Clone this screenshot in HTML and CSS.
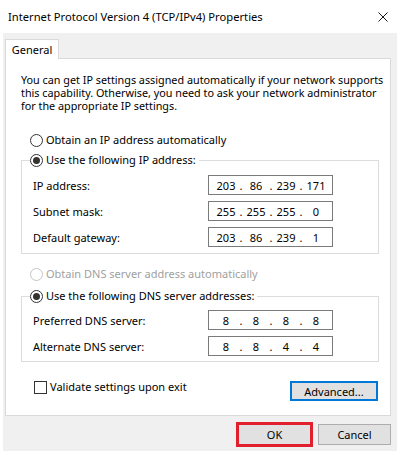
FILE: index.html
```html
<!DOCTYPE html>
<html lang="en">
<head>
    <meta charset="UTF-8">
    <title>Internet Protocol Version 4 (TCP/IPv4) Properties</title>
    <link rel="stylesheet" href="styles.css">
</head>
<body>
    <!-- Window title bar -->
    <div class="titlebar">
        <span class="title">Internet Protocol Version 4 (TCP/IPv4) Properties</span>
        <svg class="close" width="10" height="10" viewBox="0 0 10 10">
            <path d="M0.5 0.5 L9.5 9.5 M9.5 0.5 L0.5 9.5" stroke="#1a1a1a" stroke-width="1" fill="none"/>
        </svg>
    </div>

    <div class="dialog">
        <div class="tabs">
            <div class="tab">General</div>
        </div>

        <div class="panel">
            <p class="intro">You can get IP settings assigned automatically if your network supports<br>this capability. Otherwise, you need to ask your network administrator<br>for the appropriate IP settings.</p>

            <div class="option option-ip"><span class="radio"></span>Obtain an IP address automatically</div>

            <fieldset class="group group-ip">
                <legend><span class="radio checked"></span>Use the following IP address:</legend>
                <div class="field-row">
                    <span class="field-label">IP address:</span>
                    <div class="ipbox"><span>203</span><i>.</i><span>86</span><i>.</i><span>239</span><i>.</i><span>171</span></div>
                </div>
                <div class="field-row">
                    <span class="field-label">Subnet mask:</span>
                    <div class="ipbox"><span>255</span><i>.</i><span>255</span><i>.</i><span>255</span><i>.</i><span>0</span></div>
                </div>
                <div class="field-row">
                    <span class="field-label">Default gateway:</span>
                    <div class="ipbox"><span>203</span><i>.</i><span>86</span><i>.</i><span>239</span><i>.</i><span>1</span></div>
                </div>
            </fieldset>

            <div class="option option-dns disabled"><span class="radio"></span>Obtain DNS server address automatically</div>

            <fieldset class="group group-dns">
                <legend><span class="radio checked"></span>Use the following DNS server addresses:</legend>
                <div class="field-row">
                    <span class="field-label">Preferred DNS server:</span>
                    <div class="ipbox"><span>8</span><i>.</i><span>8</span><i>.</i><span>8</span><i>.</i><span>8</span></div>
                </div>
                <div class="field-row">
                    <span class="field-label">Alternate DNS server:</span>
                    <div class="ipbox"><span>8</span><i>.</i><span>8</span><i>.</i><span>4</span><i>.</i><span>4</span></div>
                </div>
            </fieldset>

            <div class="bottom-row">
                <div class="check-row"><span class="checkbox"></span>Validate settings upon exit</div>
                <button class="btn btn-advanced">Advanced...</button>
            </div>
        </div>

        <div class="buttons">
            <button class="btn btn-ok">OK</button>
            <button class="btn">Cancel</button>
        </div>
    </div>
</body>
</html>
```

FILE: styles.css
```css
/* Page base */
html, body {
    margin: 0;
    padding: 0;
    background: #fff;
    color: #000;
    font-family: 'Noto Sans', 'Liberation Sans', sans-serif;
    font-size: 11px;
}

/* Title bar */
.titlebar {
    height: 33px;
    display: flex;
    align-items: center;
    justify-content: space-between;
    padding: 0 11px 0 8px;
}

.title {
    line-height: 16px;
    font-size: 11.2px;
}

/* Gray dialog body */
.dialog {
    background: #f0f0f0;
    margin: 0 2px 0 3px;
    padding: 6px 6px 6px 2px;
}

.tabs {
    display: flex;
}

.tab {
    position: relative; /* sit over the panel border */
    width: 52px;
    height: 19px;
    line-height: 19px;
    text-align: center;
    background: #fff;
    border: 1px solid #d9d9d9;
    border-bottom: none;
    margin-bottom: -1px;
}

/* White tab page */
.panel {
    background: #fff;
    border: 1px solid #d9d9d9;
    padding: 14px 11px 14px 15px;
}

.intro {
    margin: 0;
    font-size: 10.8px;
    line-height: 13px;
    white-space: nowrap;
}

/* Radio options */
.option {
    display: flex;
    align-items: center;
    line-height: 16px;
    margin-left: 9px;
}

.option-ip {
    margin-top: 20px;
}

.option-dns {
    margin-top: 12px;
}

.disabled {
    color: #a0a0a0;
}

.radio {
    width: 11px;
    height: 11px;
    border: 1px solid #333;
    border-radius: 50%;
    margin-right: 3px;
    background: #fff;
    display: inline-flex;
    align-items: center;
    justify-content: center;
    flex-shrink: 0;
}

.disabled .radio {
    border-color: #c4c4c4;
}

.radio.checked::after {
    content: "";
    width: 7px;
    height: 7px;
    border-radius: 50%;
    background: #333;
}

/* Group boxes */
.group {
    margin: 4px 0 0 0;
    padding: 0 0 6px 11px;
    border: 1px solid #dcdcdc;
    min-width: 0;
}

.group-dns {
    margin-top: 6px;
    padding-bottom: 5px;
}

.group legend {
    display: flex;
    align-items: center;
    line-height: 16px;
    padding: 0 3px 0 0;
    margin-left: -3px;
}

.field-row {
    display: flex;
    align-items: center;
    margin-top: 6px;
}

.group-ip .field-row:first-of-type {
    margin-top: 7px;
}

.field-label {
    width: 175px;
}

/* IP address control */
.ipbox {
    width: 117px;
    height: 18px;
    border: 1px solid #7a7a7a;
    display: flex;
    align-items: center;
    padding-left: 6px;
}

.ipbox span {
    width: 22px;
    text-align: center;
}

.ipbox i {
    font-style: normal;
    width: 8px;
    text-align: center;
}

/* Checkbox + Advanced */
.bottom-row {
    display: flex;
    justify-content: space-between;
    align-items: flex-start;
    margin-top: 17px;
    padding-left: 13px;
}

.check-row {
    display: flex;
    align-items: center;
    line-height: 16px;
}

.checkbox {
    width: 11px;
    height: 11px;
    border: 1px solid #333;
    margin-right: 3px;
}

.btn {
    font-family: inherit;
    font-size: 11px;
    color: #000;
    background: #e1e1e1;
    border: 1px solid #adadad;
    height: 21px;
    padding: 0;
    margin: 0;
    width: 73px;
}

.btn-advanced {
    width: 88px;
    height: 20px;
    margin-top: 2px;
    margin-right: 1px;
    border: 2px solid #0078d7;
}

/* Bottom dialog buttons */
.buttons {
    display: flex;
    justify-content: flex-end;
    gap: 7px;
    margin-top: 8px;
}

.btn-ok {
    outline: 3px solid #e0202c;
    outline-offset: -1px;
}
```
